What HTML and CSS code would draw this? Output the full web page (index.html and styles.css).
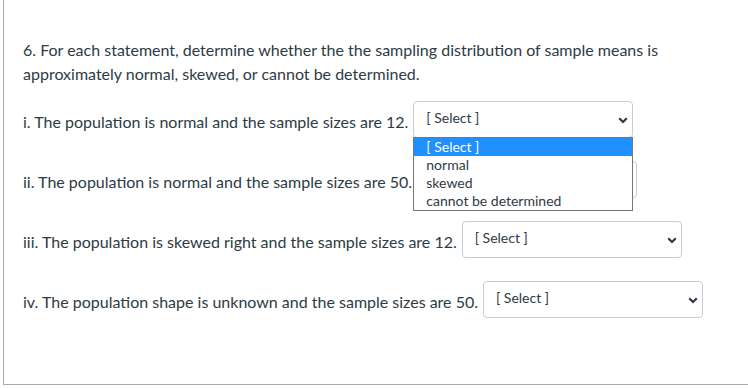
FILE: index.html
```
<!DOCTYPE html>
<html lang="en">
<head>
<meta charset="utf-8"/>
<meta content="width=device-width, initial-scale=1" name="viewport"/>
<title>Quiz question 6</title>
<link rel="stylesheet" href="styles.css">
</head>
<body>
<div class="question">
  <p class="prompt">6. For each statement, determine whether the the sampling distribution of sample means is approximately normal, skewed, or cannot be determined.</p>
  <div class="rows">
    <div class="row">
      <span class="statement">i. The population is normal and the sample sizes are 12.</span>
      <div class="select">
        <span class="select-text">[ Select ]</span>
        <svg class="chevron" viewBox="0 0 10 7" width="10" height="7"><polyline points="1.2,1.2 5,5 8.8,1.2"/></svg>
        <ul class="options">
          <li class="active">[ Select ]</li>
          <li>normal</li>
          <li>skewed</li>
          <li>cannot be determined</li>
        </ul>
      </div>
    </div>
    <div class="row">
      <span class="statement">ii. The population is normal and the sample sizes are 50.</span>
      <div class="select">
        <span class="select-text">[ Select ]</span>
        <svg class="chevron" viewBox="0 0 10 7" width="10" height="7"><polyline points="1.2,1.2 5,5 8.8,1.2"/></svg>
      </div>
    </div>
    <div class="row">
      <span class="statement">iii. The population is skewed right and the sample sizes are 12.</span>
      <div class="select">
        <span class="select-text">[ Select ]</span>
        <svg class="chevron" viewBox="0 0 10 7" width="10" height="7"><polyline points="1.2,1.2 5,5 8.8,1.2"/></svg>
      </div>
    </div>
    <div class="row">
      <span class="statement">iv. The population shape is unknown and the sample sizes are 50.</span>
      <div class="select">
        <span class="select-text">[ Select ]</span>
        <svg class="chevron" viewBox="0 0 10 7" width="10" height="7"><polyline points="1.2,1.2 5,5 8.8,1.2"/></svg>
      </div>
    </div>
  </div>
</div>
</body>
</html>
```

FILE: styles.css
```
body {
  margin: 0;
  background: white;
  font-family: Lato, "Liberation Sans", sans-serif;
  font-size: 16px;
  color: #2d3b45;
}
.question {
  box-sizing: border-box;
  margin-left: 3px;
  height: 385px;
  padding: 38px 20px 0 19px;
  border-left: 1px solid #a9a9a9;
  border-bottom: 1px solid #a9a9a9;
}
.prompt {
  margin: 0;
  line-height: 24px;
}
.rows {
  margin-top: 15px;
  display: flex;
  flex-direction: column;
  gap: 23px;
}
.row {
  display: flex;
  align-items: flex-start;
}
.statement {
  line-height: 24px;
  padding-top: 9px;
  white-space: nowrap;
}
.select {
  position: relative;
  box-sizing: border-box;
  width: 220px;
  height: 37px;
  margin-left: 5px;
  padding: 7px 4px 0 12px;
  border: 1px solid #c7cdd1;
  border-radius: 4px;
  background: white;
  display: flex;
  justify-content: space-between;
  font-size: 14px;
}
.select-text {
  line-height: normal;
}
.chevron {
  margin-top: 8px;
}
.chevron polyline {
  fill: none;
  stroke: #2d3b45;
  stroke-width: 2.2;
}
.options {
  position: absolute;
  z-index: 10;
  top: 35px;
  left: -1px;
  width: 220px;
  box-sizing: border-box;
  margin: 0;
  padding: 0;
  list-style: none;
  background: white;
  border: 1px solid #767676;
  font-size: 14px;
}
.options li {
  line-height: normal;
  padding: 0 2px 1px 12px;
}
.options .active {
  background: #1e90ff;
  color: white;
}
```
